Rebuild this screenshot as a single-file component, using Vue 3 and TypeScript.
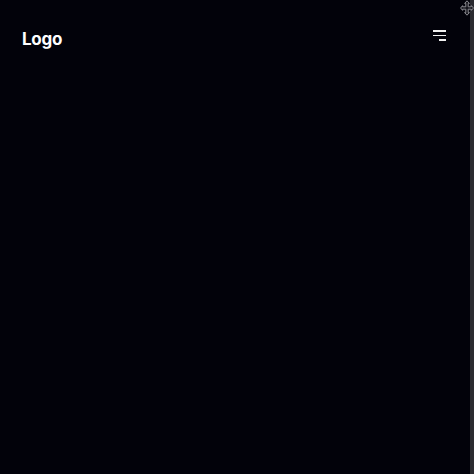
<script setup lang="ts">
const title: string = 'Logo'
</script>

<template>
  <div class="page">
    <main class="content">
      <header class="nav">
        <span class="logo">{{ title }}</span>
        <button class="menu" aria-label="Menu">
          <span class="line"></span>
          <span class="line"></span>
          <span class="line short"></span>
        </button>
      </header>
      <svg class="cursor" width="14" height="16" viewBox="0 0 14 16" fill="none">
        <path d="M7 .8 9.4 3.4H8.2V6.8H11.4V5.6L13.4 8 11.4 10.4V9.2H8.2V12.6H9.4L7 15.2 4.6 12.6H5.8V9.2H2.6V10.4L.6 8 2.6 5.6V6.8H5.8V3.4H4.6Z" fill="#15151c" stroke="#8a8a90" stroke-width="1"/>
      </svg>
    </main>
    <div class="scrollbar"></div>
  </div>
</template>

<style scoped>
.page {
  display: flex;
  width: 474px;
  height: 474px;
  overflow: hidden;
  background: #02020a;
}
.content {
  position: relative;
  flex: 1;
  min-width: 0;
}
.nav {
  display: flex;
  justify-content: space-between;
  align-items: flex-start;
  padding: 28px 24px 0 22px;
}
.logo {
  margin-top: 1px;
  color: #fff;
  font-family: Inter, "Liberation Sans", sans-serif;
  font-size: 17px;
  font-weight: 700;
  letter-spacing: -0.3px;
  line-height: 21px;
}
.menu {
  display: flex;
  flex-direction: column;
  align-items: flex-end;
  gap: 3px;
  width: 13px;
  margin-top: 2px;
  padding: 0;
  border: 0;
  background: none;
}
.line {
  display: block;
  width: 13px;
  height: 1.5px;
  background: #f0f0f0;
}
.short {
  width: 7px;
}
.cursor {
  position: absolute;
  top: 0;
  right: -4px;
}
.scrollbar {
  flex: none;
  width: 4px;
  background: #2b2b30;
}
</style>

<style>
html, body { margin: 0; background: #02020a; }
</style>
